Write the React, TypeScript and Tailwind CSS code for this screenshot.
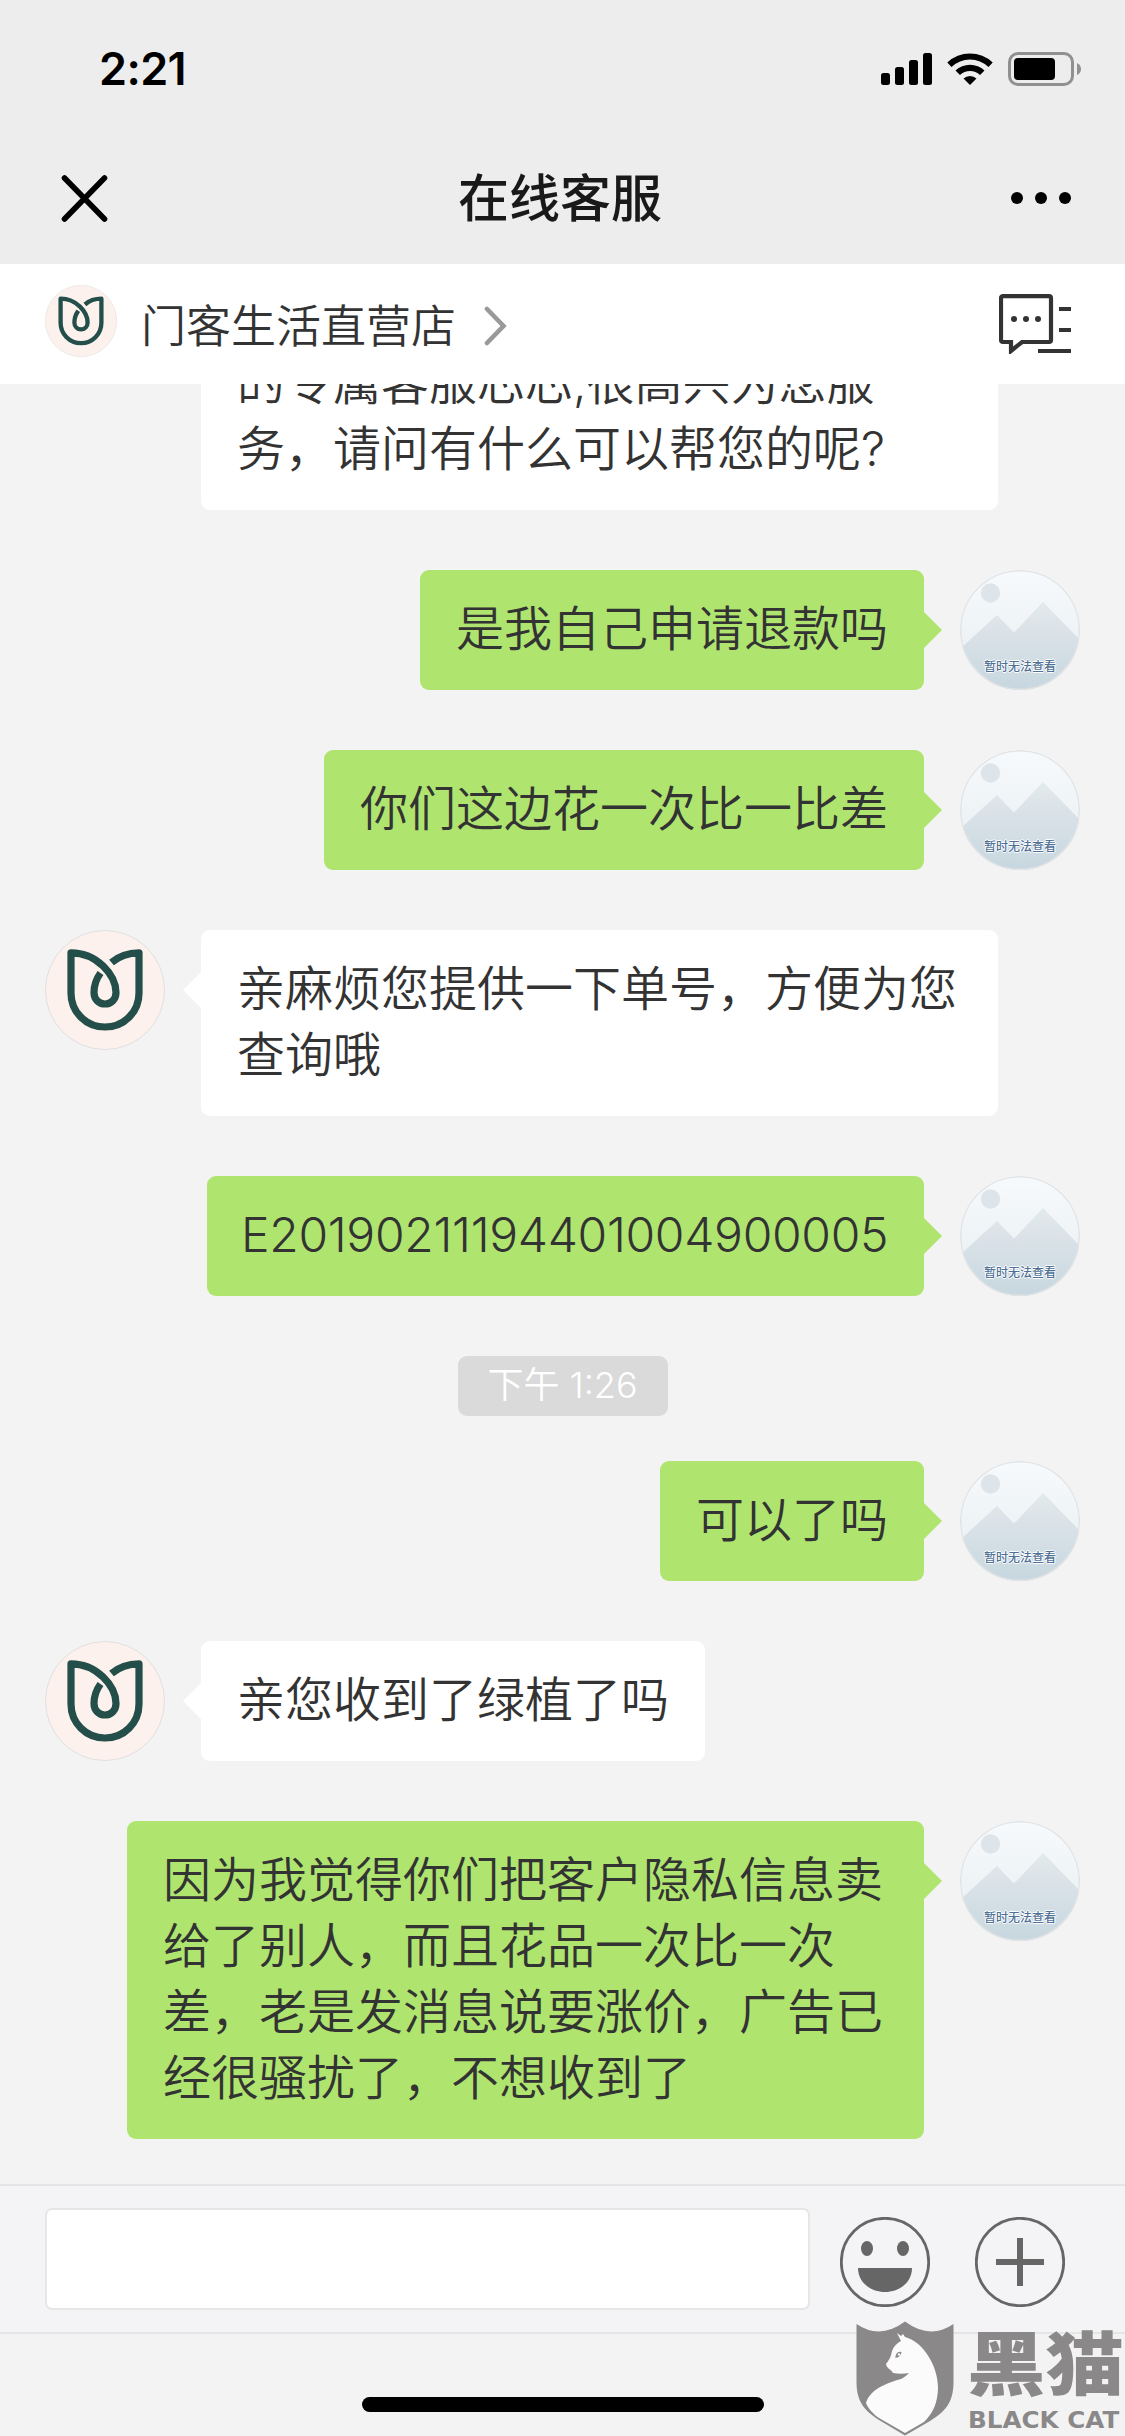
import type { ReactNode } from "react";

type Message =
  | { kind: "shop" | "me"; lines: string[]; wide?: boolean; latin?: boolean }
  | { kind: "time"; text: string };

const messages: Message[] = [
  {
    kind: "shop",
    wide: true,
    // first row of this message is scrolled under the shop bar
    lines: ["\u00a0", "的专属客服芯芯,很高兴为您服", "务，请问有什么可以帮您的呢?"],
  },
  { kind: "me", lines: ["是我自己申请退款吗"] },
  { kind: "me", lines: ["你们这边花一次比一比差"] },
  { kind: "shop", wide: true, lines: ["亲麻烦您提供一下单号，方便为您", "查询哦"] },
  { kind: "me", latin: true, lines: ["E20190211194401004900005"] },
  { kind: "time", text: "下午 1:26" },
  { kind: "me", lines: ["可以了吗"] },
  { kind: "shop", lines: ["亲您收到了绿植了吗"] },
  {
    kind: "me",
    wide: true,
    lines: [
      "因为我觉得你们把客户隐私信息卖",
      "给了别人，而且花品一次比一次",
      "差，老是发消息说要涨价，广告已",
      "经很骚扰了，不想收到了",
    ],
  },
];

function ShopLogo({ className }: { className: string }) {
  return (
    <svg viewBox="0 0 120 120" className={className}>
      <circle cx="60" cy="60" r="59.5" fill="#fcf1ec" stroke="#e0e0e0" />
      <g fill="none" stroke="#234e49" strokeWidth="7.2" strokeLinejoin="round">
        <path d="M66.5 32.5C74 26 83 22.8 94 22.8V63C94 82 79 97 60 97S26 82 26 63V22.8C52 22.8 71 45 71 62.5C71 69.5 66 74 60 74S49 69.5 49 62.5C49 55 51.5 48.5 55.5 43" />
      </g>
    </svg>
  );
}

function UserAvatar() {
  return (
    <div className="relative h-[120px] w-[120px] shrink-0 overflow-hidden rounded-full">
      <svg viewBox="0 0 120 120" className="h-full w-full">
        <defs>
          <linearGradient id="sky" x1="0" y1="0" x2="0" y2="1">
            <stop offset="0" stopColor="#f7fafc" />
            <stop offset="1" stopColor="#e6edf1" />
          </linearGradient>
          <linearGradient id="hill" x1="0" y1="32" x2="0" y2="120" gradientUnits="userSpaceOnUse">
            <stop offset="0" stopColor="#e3eaeb" />
            <stop offset="0.35" stopColor="#dae2e8" />
            <stop offset="1" stopColor="#c7d7df" />
          </linearGradient>
        </defs>
        <rect width="120" height="120" fill="url(#sky)" />
        <circle cx="30.5" cy="23" r="9.7" fill="#dde4ea" />
        <path d="M0 79 37 45 54 62.5 83 32 120 70V120H0Z" fill="url(#hill)" />
        <circle cx="60" cy="60" r="59.3" fill="none" stroke="#e2e3e4" strokeWidth="1.5" />
      </svg>
      <span className="absolute inset-x-0 top-[88px] text-center text-[12px] leading-[18px] font-medium text-[#4f7196] [text-shadow:0_0_1px_#fff,1px_0_0_#fff,-1px_0_0_#fff,0_1px_0_#fff,0_-1px_0_#fff]">
        暂时无法查看
      </span>
    </div>
  );
}

function Bubble({ mine, wide, latin, lines }: { mine?: boolean; wide?: boolean; latin?: boolean; lines: string[] }) {
  return (
    <div
      className={`relative rounded-[9px] px-9 pt-[26px] pb-7 text-[48px] leading-[66px] font-[350] whitespace-nowrap text-[#333] ${
        mine ? "bg-[#afe56f]" : "bg-white"
      } ${wide ? "w-[797px]" : ""}`}
    >
      {mine ? (
        <svg viewBox="0 0 18 36" className="absolute top-[42px] -right-[18px] h-9 w-[18px]">
          <path d="M0 0 18 18 0 36Z" fill="#afe56f" />
        </svg>
      ) : (
        <svg viewBox="0 0 18 36" className="absolute top-[42px] -left-[18px] h-9 w-[18px]">
          <path d="M18 0 0 18 18 36Z" fill="#fff" />
        </svg>
      )}
      {lines.map((line) => (
        <p key={line} className={latin ? "-ml-0.5 w-[647px] tracking-[-0.3px]" : ""}>
          {line}
        </p>
      ))}
    </div>
  );
}

function Row({ mine, children }: { mine?: boolean; children: ReactNode }) {
  return (
    <div className={`flex shrink-0 items-start gap-9 px-[45px] ${mine ? "justify-end" : ""}`}>
      {children}
    </div>
  );
}

function StatusIcons() {
  return (
    <svg viewBox="0 0 202 36" className="h-9 w-[202px]">
      <rect x="1" y="22" width="9" height="12" rx="2.5" />
      <rect x="15" y="16" width="9" height="18" rx="2.5" />
      <rect x="29" y="9" width="9" height="25" rx="2.5" />
      <rect x="43" y="2" width="9" height="32" rx="2.5" />
      <path d="M67.3 11.5A33 33 0 0 1 112.7 11.5L108.5 16A26.5 26.5 0 0 0 71.5 16Z" />
      <path d="M75.5 19.5A21 21 0 0 1 104.5 19.5L100 24A14.5 14.5 0 0 0 80 24Z" />
      <path d="M83.5 27.5A9.5 9.5 0 0 1 96.5 27.5L90 34Z" />
      <rect x="129.5" y="2.5" width="63" height="31" rx="8.5" fill="none" stroke="#909090" strokeWidth="3" />
      <rect x="134" y="7" width="41" height="22" rx="4" />
      <path d="M197 12Q201 14 201 18T197 24Z" fill="#909090" />
    </svg>
  );
}

function Watermark() {
  return (
    <div className="absolute right-0 bottom-0 flex h-[116px] w-[270px] text-[#8a8889]">
      <svg viewBox="0 0 98 116" className="ml-px h-[116px] w-[98px] shrink-0">
        <path
          d="M0.5 4Q24 20 49 1.5Q74 20 97.5 4V62C97.5 84 88 92 74 101L49 115.5 23 100C9 91 0.5 82 0.5 62Z"
          fill="#8a8889"
        />
        <path
          d="M41 13 45 16 47 14 49 17C68 22 82 47 82 67C82 84 76 94 68 102L49 113 23 98C17 94 12 88 10 83C14 69 31 63 45 59C49 57 51 55 53 53C48 54 42 54 37 53C35 49 31 49 30 44C34 39 35 36 36 31C38 26 41 23 45 21Z"
          fill="#fbfbfb"
        />
        <path d="M39.5 36Q41 31 45.5 32Q45 37 39.5 38Z" fill="#8a8889" />
        <circle cx="43" cy="34.5" r="1.3" fill="#fbfbfb" />
      </svg>
      <div className="ml-[13px] flex flex-col">
        <span className="mt-[6px] h-[78px] origin-left scale-x-[1.02] scale-y-[0.9] text-[77px] leading-[78px] font-black whitespace-nowrap">
          黑猫
        </span>
        <span className="mt-1 ml-px origin-left scale-x-[1.07] text-[23px] leading-[24px] font-bold whitespace-nowrap font-['DejaVu_Sans']">
          BLACK CAT
        </span>
      </div>
    </div>
  );
}

export default function App() {
  return (
    <div className="relative flex h-[2436px] w-[1125px] flex-col overflow-hidden bg-[#f3f3f3] font-['Inter','Noto_Sans_CJK_SC',sans-serif]">
      <header className="flex h-[264px] shrink-0 flex-col bg-[#ededed]">
        <div className="flex h-[132px] items-center justify-between pt-1.5 pr-[43px] pl-[99px]">
          <span className="text-[45px] font-semibold tracking-[-0.6px]">2:21</span>
          <StatusIcons />
        </div>
        <div className="flex h-[132px] items-center justify-between px-[54px]">
          <svg viewBox="0 0 60 60" className="h-[60px] w-[60px]">
            <path d="M10.5 10 50.5 51M50.5 10 10.5 51" stroke="#000" strokeWidth="5.6" strokeLinecap="round" />
          </svg>
          <h1 className="mt-0.5 mr-[5px] text-[51px] leading-[60px] font-medium text-[#191919]">在线客服</h1>
          <svg viewBox="0 0 60 12" className="h-3 w-[60px]">
            <circle cx="6" cy="6" r="6" />
            <circle cx="30" cy="6" r="6" />
            <circle cx="54" cy="6" r="6" />
          </svg>
        </div>
      </header>

      <section className="flex h-[120px] shrink-0 items-center bg-white pr-[54px] pl-[45px]">
        <ShopLogo className="mb-1.5 h-[72px] w-[72px]" />
        <span className="mt-1.5 ml-6 text-[45px] leading-[60px] font-[350] text-[#333]">门客生活直营店</span>
        <svg viewBox="0 0 24 40" className="mt-[3px] ml-7 h-10 w-6">
          <path d="M3 3 19.5 20 3 37" fill="none" stroke="#999" strokeWidth="4.6" strokeLinecap="round" />
        </svg>
        <svg viewBox="0 0 72 60" className="mb-px ml-auto h-[60px] w-[72px]">
          <path
            d="M4 2.2H50Q52 2.2 52 4.2V46Q52 48 50 48H23L12 57V48H4Q2 48 2 46V4.2Q2 2.2 4 2.2Z"
            fill="none"
            stroke="#333"
            strokeWidth="4.2"
          />
          <path d="M60 15H72M60 36H72M39 57H72" stroke="#333" strokeWidth="4.2" />
          <circle cx="15" cy="25" r="3" fill="#333" />
          <circle cx="27" cy="25" r="3" fill="#333" />
          <circle cx="39" cy="25" r="3" fill="#333" />
        </svg>
      </section>

      <main className="flex h-[1800px] shrink-0 flex-col justify-end gap-[60px] overflow-hidden pb-[45px]">
        {messages.map((message, i) => {
          if (message.kind === "time") {
            return (
              <div key={i} className="-mb-[15px] flex shrink-0 justify-center">
                <span className="h-[60px] w-[210px] rounded-[9px] bg-[#dadada] text-center text-[36px] leading-[58px] font-[350] text-white">
                  {message.text}
                </span>
              </div>
            );
          }
          return message.kind === "me" ? (
            <Row key={i} mine>
              <Bubble mine wide={message.wide} latin={message.latin} lines={message.lines} />
              <UserAvatar />
            </Row>
          ) : (
            <Row key={i}>
              <ShopLogo className="h-[120px] w-[120px] shrink-0" />
              <Bubble wide={message.wide} lines={message.lines} />
            </Row>
          );
        })}
      </main>

      <footer className="flex h-[150px] shrink-0 items-center border-y-2 border-[#e5e5e5] bg-[#f4f4f6] pl-[45px]">
        <div className="h-[102px] w-[765px] rounded-[7px] border-2 border-[#e6e6e6] bg-white" />
        <svg viewBox="0 0 90 90" className="mt-1.5 ml-[30px] h-[90px] w-[90px]">
          <circle cx="45" cy="45" r="43.7" fill="none" stroke="#666" strokeWidth="2.8" />
          <ellipse cx="27" cy="31.5" rx="6" ry="7.5" fill="#666" />
          <ellipse cx="63" cy="31.5" rx="6" ry="7.5" fill="#666" />
          <path d="M18 51H72C72 65 60 75 45 75S18 65 18 51Z" fill="#666" />
        </svg>
        <svg viewBox="0 0 90 90" className="mt-1.5 ml-[45px] h-[90px] w-[90px]">
          <circle cx="45" cy="45" r="43.7" fill="none" stroke="#666" strokeWidth="2.8" />
          <path d="M45 21V69M21 45H69" stroke="#666" strokeWidth="6" />
        </svg>
      </footer>

      <div className="mx-auto mt-[63px] h-[15px] w-[402px] rounded-full bg-black" />
      <Watermark />
    </div>
  );
}
